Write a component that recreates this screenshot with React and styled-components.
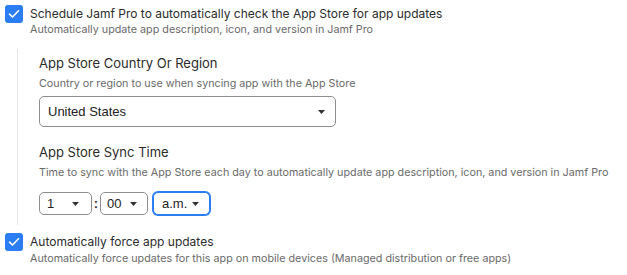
import React from "react";
import styled, { createGlobalStyle } from "styled-components";

const Global = createGlobalStyle`
  html, body { margin: 0; padding: 0; background: #fff; }
  body { font-family: Inter, "Noto Sans", sans-serif; -webkit-font-smoothing: antialiased; }
`;

const Page = styled.div`
  padding: 6px 0 0 5px;
  display: flex;
  flex-direction: column;
`;

const CheckRow = styled.div`
  display: flex;
  align-items: flex-start;
  gap: 7px;
  margin-top: ${(p) => p.$top || 0}px;
`;

const Box = styled.div`
  width: 18px;
  height: 18px;
  flex: none;
  border-radius: 3px;
  background: #2a7df2;
  display: flex;
  align-items: center;
  justify-content: center;
  margin-top: -1px;
`;

const TextCol = styled.div`
  display: flex;
  flex-direction: column;
`;

const Title = styled.div`
  font-size: 12px;
  line-height: 16px;
  color: #2b2b2b;
`;

const Desc = styled.div`
  font-size: 10.75px;
  line-height: 15px;
  color: #6a6a6a;
  margin-top: ${(p) => p.$top || 0}px;
`;

const Nested = styled.div`
  margin: 12px 0 0 12px;
  border-left: 1px solid #e8e8e8;
  padding: 6px 0 10px 21px;
  display: flex;
  flex-direction: column;
`;

const Field = styled.div`
  display: flex;
  flex-direction: column;
  margin-top: ${(p) => p.$top || 0}px;
`;

const Label = styled.div`
  font-size: 13px;
  line-height: 17px;
  color: #2b2b2b;
`;

const Select = styled.div`
  box-sizing: border-box;
  width: ${(p) => p.$w}px;
  height: ${(p) => p.$h}px;
  margin-top: ${(p) => p.$top || 0}px;
  border: 1px solid ${(p) => (p.$focus ? "#2a7df2" : "#8e8e8e")};
  box-shadow: ${(p) => (p.$focus ? "0 0 0 1px #2a7df2" : "none")};
  border-radius: 5px;
  display: flex;
  align-items: center;
  justify-content: space-between;
  padding: 0 ${(p) => p.$pr}px 0 ${(p) => p.$pl}px;
  font-family: "Liberation Sans", Arial, sans-serif;
  font-size: 13px;
  color: #222;
  background: #fff;
`;

const TimeRow = styled.div`
  display: flex;
  align-items: center;
  margin-top: 12px;
`;

const Colon = styled.span`
  font-family: "Liberation Sans", Arial, sans-serif;
  font-weight: bold;
  font-size: 13px;
  color: #333;
  width: 8px;
  text-align: center;
`;

const Gap = styled.div`
  width: 5px;
`;

const Arrow = () => (
  <svg width="7" height="4" viewBox="0 0 7 4">
    <path d="M0 0 H7 L3.5 4 Z" fill="#333" />
  </svg>
);

const Check = () => (
  <svg width="12" height="10" viewBox="0 0 12 10">
    <path d="M1.5 5.2 L4.5 8 L10.5 1.8" fill="none" stroke="#fff" strokeWidth="1.6" strokeLinecap="round" strokeLinejoin="round" />
  </svg>
);

export default function App() {
  return (
    <>
      <Global />
      <Page>
        <CheckRow>
          <Box><Check /></Box>
          <TextCol>
            <Title>Schedule Jamf Pro to automatically check the App Store for app updates</Title>
            <Desc>Automatically update app description, icon, and version in Jamf Pro</Desc>
          </TextCol>
        </CheckRow>
        <Nested>
          <Field>
            <Label>App Store Country Or Region</Label>
            <Desc $top={4}>Country or region to use when syncing app with the App Store</Desc>
            <Select $w={297} $h={31} $pl={8} $pr={10} $top={5}>
              <span>United States</span>
              <Arrow />
            </Select>
          </Field>
          <Field $top={17}>
            <Label>App Store Sync Time</Label>
            <Desc $top={4}>Time to sync with the App Store each day to automatically update app description, icon, and version in Jamf Pro</Desc>
            <TimeRow>
              <Select $w={53} $h={23} $pl={7} $pr={12}>
                <span>1</span>
                <Arrow />
              </Select>
              <Colon>:</Colon>
              <Select $w={48} $h={23} $pl={6} $pr={10}>
                <span>00</span>
                <Arrow />
              </Select>
              <Gap />
              <Select $w={57} $h={23} $pl={8} $pr={10} $focus>
                <span>a.m.</span>
                <Arrow />
              </Select>
            </TimeRow>
          </Field>
        </Nested>
        <CheckRow $top={9}>
          <Box><Check /></Box>
          <TextCol>
            <Title>Automatically force app updates</Title>
            <Desc $top={1}>Automatically force updates for this app on mobile devices (Managed distribution or free apps)</Desc>
          </TextCol>
        </CheckRow>
      </Page>
    </>
  );
}
